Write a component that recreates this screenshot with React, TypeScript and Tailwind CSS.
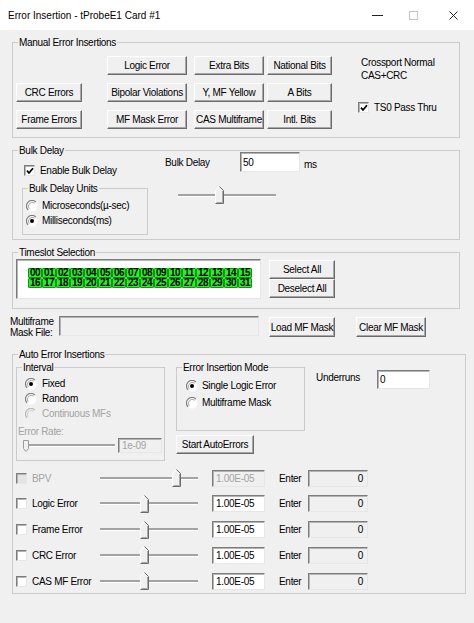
import React from 'react';

// Windows-style "Error Insertion" dialog

const sunken =
  'border border-t-[#7c7c7c] border-l-[#7c7c7c] border-r-[#e6e6e6] border-b-[#e6e6e6] shadow-[inset_1px_1px_0_#b4b4b4]';

function Btn({ children, className = '' }: { children: React.ReactNode; className?: string }) {
  return (
    <div
      className={`flex items-center justify-center whitespace-nowrap bg-[#f0f0f0] border border-t-white border-l-white border-r-[#6b6b6b] border-b-[#6b6b6b] shadow-[inset_-1px_-1px_0_#a8a8a8] ${className}`}
    >
      {children}
    </div>
  );
}

function Group({ label, className = '', children }: { label: string; className?: string; children: React.ReactNode }) {
  return (
    <fieldset className={`border border-[#cbcbcb] min-w-0 ${className}`}>
      <legend className="ml-[5px] px-[1px] leading-[13px]">{label}</legend>
      {children}
    </fieldset>
  );
}

function Check({ checked = false, disabled = false }: { checked?: boolean; disabled?: boolean }) {
  return (
    <span
      className={`w-[11px] h-[11px] shrink-0 flex items-center justify-center ${sunken} ${disabled ? 'bg-[#e4e4e4]' : 'bg-white'}`}
    >
      {checked && (
        <svg width="8" height="8" viewBox="0 0 8 8">
          <path d="M1 3.6 L3 6 L7 1.2" stroke="#000" strokeWidth="1.7" fill="none" />
        </svg>
      )}
    </span>
  );
}

function Radio({ checked = false, disabled = false }: { checked?: boolean; disabled?: boolean }) {
  return (
    <svg width="12" height="12" viewBox="0 0 12 12" className="shrink-0">
      <circle cx="6" cy="6" r="5.5" fill={disabled ? '#f0f0f0' : '#ffffff'} />
      <path d="M9.9 2.1 A5.5 5.5 0 0 0 2.1 9.9" stroke={disabled ? '#b8b8b8' : '#7c7c7c'} strokeWidth="1.2" fill="none" />
      <path d="M8.8 3.2 A4 4 0 0 0 3.2 8.8" stroke={disabled ? '#d0d0d0' : '#a8a8a8'} strokeWidth="1" fill="none" />
      {checked && <circle cx="6" cy="6" r="2" fill="#000" />}
    </svg>
  );
}

function Slider({ className = '', pos, small = false }: { className?: string; pos: number; small?: boolean }) {
  return (
    <div className={`relative flex items-center ${className}`}>
      <div className="w-full h-[3px] bg-[#a3a3a3] border-b border-b-white" />
      {small ? (
        <svg width="6" height="12" viewBox="0 0 6 12" className="absolute top-1/2 -translate-y-1/2" style={{ left: pos }}>
          <path d="M0.5 0.5 H5.5 V8.5 L3 11.5 L0.5 8.5 Z" fill="#f0f0f0" stroke="#9a9a9a" />
        </svg>
      ) : (
        <svg width="9" height="18" viewBox="0 0 9 18" className="absolute top-0" style={{ left: pos }}>
          <path d="M0.5 17.5 V4.5 L4.5 0.5 L8.5 4.5 V17.5 Z" fill="#f0f0f0" />
          <path d="M0.5 17 V4.5 L4.5 0.5" stroke="#ffffff" fill="none" />
          <path d="M4.5 0.5 L8.5 4.5 V17.5 H0.5" stroke="#6b6b6b" fill="none" />
          <path d="M7.5 5 V16.5 H1.5" stroke="#a8a8a8" fill="none" />
        </svg>
      )}
    </div>
  );
}

const slots = Array.from({ length: 32 }, (_, i) => String(i).padStart(2, '0'));

const autoRows = [
  { label: 'BPV', pos: 72, disabled: true },
  { label: 'Logic Error', pos: 40, disabled: false },
  { label: 'Frame Error', pos: 40, disabled: false },
  { label: 'CRC Error', pos: 40, disabled: false },
  { label: 'CAS MF Error', pos: 40, disabled: false },
];

export default function App() {
  return (
    <div className="w-[474px] h-[623px] overflow-hidden bg-[#f0f0f0] text-black text-[10px] tracking-[-0.3px] font-['Liberation_Sans',Arial,sans-serif]">
      {/* title bar */}
      <div className="h-[30px] bg-white flex items-center pl-[8px] tracking-normal">
        <span>Error Insertion - tProbeE1 Card #1</span>
        <div className="ml-auto flex items-center pr-[16px]">
          <svg width="15" height="10" viewBox="0 0 15 10">
            <path d="M2 5.5 H13" stroke="#222" strokeWidth="1" />
          </svg>
          <svg width="9" height="9" viewBox="0 0 9 9" className="ml-[24px]">
            <rect x="0.5" y="0.5" width="8" height="8" fill="none" stroke="#c4c4c4" />
          </svg>
          <svg width="9" height="9" viewBox="0 0 9 9" className="ml-[31px]">
            <path d="M0.5 0.5 L8.5 8.5 M8.5 0.5 L0.5 8.5" stroke="#222" strokeWidth="1" />
          </svg>
        </div>
      </div>

      <div className="pl-[12px]">
        {/* Manual Error Insertions */}
        <Group label="Manual Error Insertions" className="mt-[6px] w-[448px] h-[102px]">
          <div className="flex mt-[7px] ml-[3px]">
            <div className="flex flex-col gap-[8px] mt-[27px] w-[66px]">
              <Btn className="h-[19px]">CRC Errors</Btn>
              <Btn className="h-[19px]">Frame Errors</Btn>
            </div>
            <div className="flex flex-col gap-[8px] ml-[25px] w-[80px]">
              <Btn className="h-[19px]">Logic Error</Btn>
              <Btn className="h-[19px]">Bipolar Violations</Btn>
              <Btn className="h-[19px]">MF Mask Error</Btn>
            </div>
            <div className="flex flex-col gap-[8px] ml-[7px] w-[70px]">
              <Btn className="h-[19px]">Extra Bits</Btn>
              <Btn className="h-[19px]">Y, MF Yellow</Btn>
              <Btn className="h-[19px]">CAS Multiframe</Btn>
            </div>
            <div className="flex flex-col gap-[8px] ml-[3px] w-[65px]">
              <Btn className="h-[19px]">National Bits</Btn>
              <Btn className="h-[19px]">A Bits</Btn>
              <Btn className="h-[19px]">Intl. Bits</Btn>
            </div>
            <div className="ml-[29px] flex flex-col">
              <div className="leading-[13px]">
                <div>Crossport Normal</div>
                <div>CAS+CRC</div>
              </div>
              <div className="mt-[19px] -ml-[3px] h-[13px] flex items-center gap-[5px]">
                <Check checked />
                <span>TS0 Pass Thru</span>
              </div>
            </div>
          </div>
        </Group>

        {/* Bulk Delay */}
        <Group label="Bulk Delay" className="mt-[6px] w-[448px] h-[96px]">
          <div className="flex">
            <div className="w-[137px] flex flex-col">
              <div className="mt-[7px] ml-[11px] h-[13px] flex items-center gap-[5px]">
                <Check checked />
                <span>Enable Bulk Delay</span>
              </div>
              <Group label="Bulk Delay Units" className="mt-[5px] ml-[9px] w-[126px] h-[53px]">
                <div className="mt-[4px] ml-[3px] flex flex-col gap-[2px]">
                  <div className="h-[13px] flex items-center gap-[4px]">
                    <Radio />
                    <span>Microseconds(µ-sec)</span>
                  </div>
                  <div className="h-[13px] flex items-center gap-[4px]">
                    <Radio checked />
                    <span>Milliseconds(ms)</span>
                  </div>
                </div>
              </Group>
            </div>
            <div className="-mt-[5px] flex flex-col">
              <div className="flex items-start">
                <span className="ml-[15px] mt-[4px] w-[75px] leading-[13px]">Bulk Delay</span>
                <div className={`w-[60px] h-[20px] bg-white pl-[2px] flex items-center ${sunken}`}>50</div>
                <span className="ml-[4px] mt-[6px] leading-[13px]">ms</span>
              </div>
              <Slider className="mt-[14px] ml-[28px] w-[98px] h-[18px]" pos={37} />
            </div>
          </div>
        </Group>

        {/* Timeslot Selection */}
        <Group label="Timeslot Selection" className="mt-[6px] w-[448px] h-[63px]">
          <div className="flex">
            <div className={`ml-[3px] w-[245px] h-[40px] bg-white pl-[11px] pt-[8px] ${sunken}`}>
              <div className="grid grid-cols-[repeat(16,14px)] grid-rows-[10px_10px] tracking-[-0.6px]">
                {slots.map((s) => (
                  <div
                    key={s}
                    className="bg-[#22f522] border border-[#149214] rounded-[1px] flex items-center justify-center font-bold text-[10px] leading-none"
                  >
                    {s}
                  </div>
                ))}
              </div>
            </div>
            <div className="ml-[8px] mt-[1px] flex flex-col w-[66px]">
              <Btn className="h-[19px]">Select All</Btn>
              <Btn className="h-[19px]">Deselect All</Btn>
            </div>
          </div>
        </Group>

        {/* Multiframe mask file */}
        <div className="mt-[7px] flex items-start">
          <div className="-ml-[2px] w-[49px] leading-[11px]">
            <div>Multiframe</div>
            <div>Mask File:</div>
          </div>
          <div className={`w-[200px] h-[20px] bg-[#f0f0f0] ${sunken}`} />
          <Btn className="ml-[10px] mt-[1px] w-[66px] h-[20px]">Load MF Mask</Btn>
          <Btn className="ml-[21px] mt-[1px] w-[70px] h-[20px]">Clear MF Mask</Btn>
        </div>

        {/* Auto Error Insertions */}
        <Group label="Auto Error Insertions" className="mt-[10px] w-[454px] h-[246px]">
          <div className="flex items-start">
            <Group label="Interval" className="ml-[3px] w-[149px] h-[100px]">
              <div className="mt-[3px] ml-[8px] flex flex-col gap-[2px]">
                <div className="h-[13px] flex items-center gap-[5px]">
                  <Radio checked />
                  <span>Fixed</span>
                </div>
                <div className="h-[13px] flex items-center gap-[5px]">
                  <Radio />
                  <span>Random</span>
                </div>
                <div className="h-[13px] flex items-center gap-[5px] text-[#a3a3a3]">
                  <Radio disabled />
                  <span>Continuous MFs</span>
                </div>
              </div>
              <div className="mt-[5px] ml-[1px] leading-[13px] text-[#a3a3a3]">Error Rate:</div>
              <div className="flex items-center">
                <Slider className="ml-[8px] w-[90px] h-[15px]" pos={-2} small />
                <div className={`ml-[3px] w-[44px] h-[15px] pl-[3px] flex items-center text-[#a3a3a3] bg-[#f0f0f0] ${sunken}`}>1e-09</div>
              </div>
            </Group>
            <div className="ml-[11px] flex flex-col w-[129px]">
              <Group label="Error Insertion Mode" className="w-[129px] h-[70px]">
                <div className="mt-[5px] ml-[9px] flex flex-col gap-[4px]">
                  <div className="h-[13px] flex items-center gap-[4px]">
                    <Radio checked />
                    <span>Single Logic Error</span>
                  </div>
                  <div className="h-[13px] flex items-center gap-[4px]">
                    <Radio />
                    <span>Multiframe Mask</span>
                  </div>
                </div>
              </Group>
              <Btn className="mt-[4px] w-[78px] h-[19px]">Start AutoErrors</Btn>
            </div>
            <span className="ml-[11px] mt-[10px] w-[61px] leading-[13px]">Underruns</span>
            <div className={`mt-[9px] w-[53px] h-[19px] bg-white pl-[2px] flex items-center ${sunken}`}>0</div>
          </div>

          <div className="mt-[8px] flex flex-col gap-[7.75px]">
            {autoRows.map((r) => (
              <div key={r.label} className="h-[18px] flex items-center">
                <div className="ml-[3px] w-[84px] flex items-center gap-[5px]">
                  <Check disabled={r.disabled} />
                  <span className={r.disabled ? 'text-[#a3a3a3]' : ''}>{r.label}</span>
                </div>
                <Slider className="w-[98px] h-[18px]" pos={r.pos} />
                <div
                  className={`ml-[14px] w-[53px] h-[17px] pl-[3px] flex items-center ${sunken} ${r.disabled ? 'bg-[#f0f0f0] text-[#a3a3a3]' : 'bg-white'}`}
                >
                  1.00E-05
                </div>
                <span className="ml-[14px] w-[29px]">Enter</span>
                <div className={`w-[60px] h-[17px] pr-[4px] flex items-center justify-end bg-[#f0f0f0] ${sunken}`}>0</div>
              </div>
            ))}
          </div>
        </Group>
      </div>
    </div>
  );
}
